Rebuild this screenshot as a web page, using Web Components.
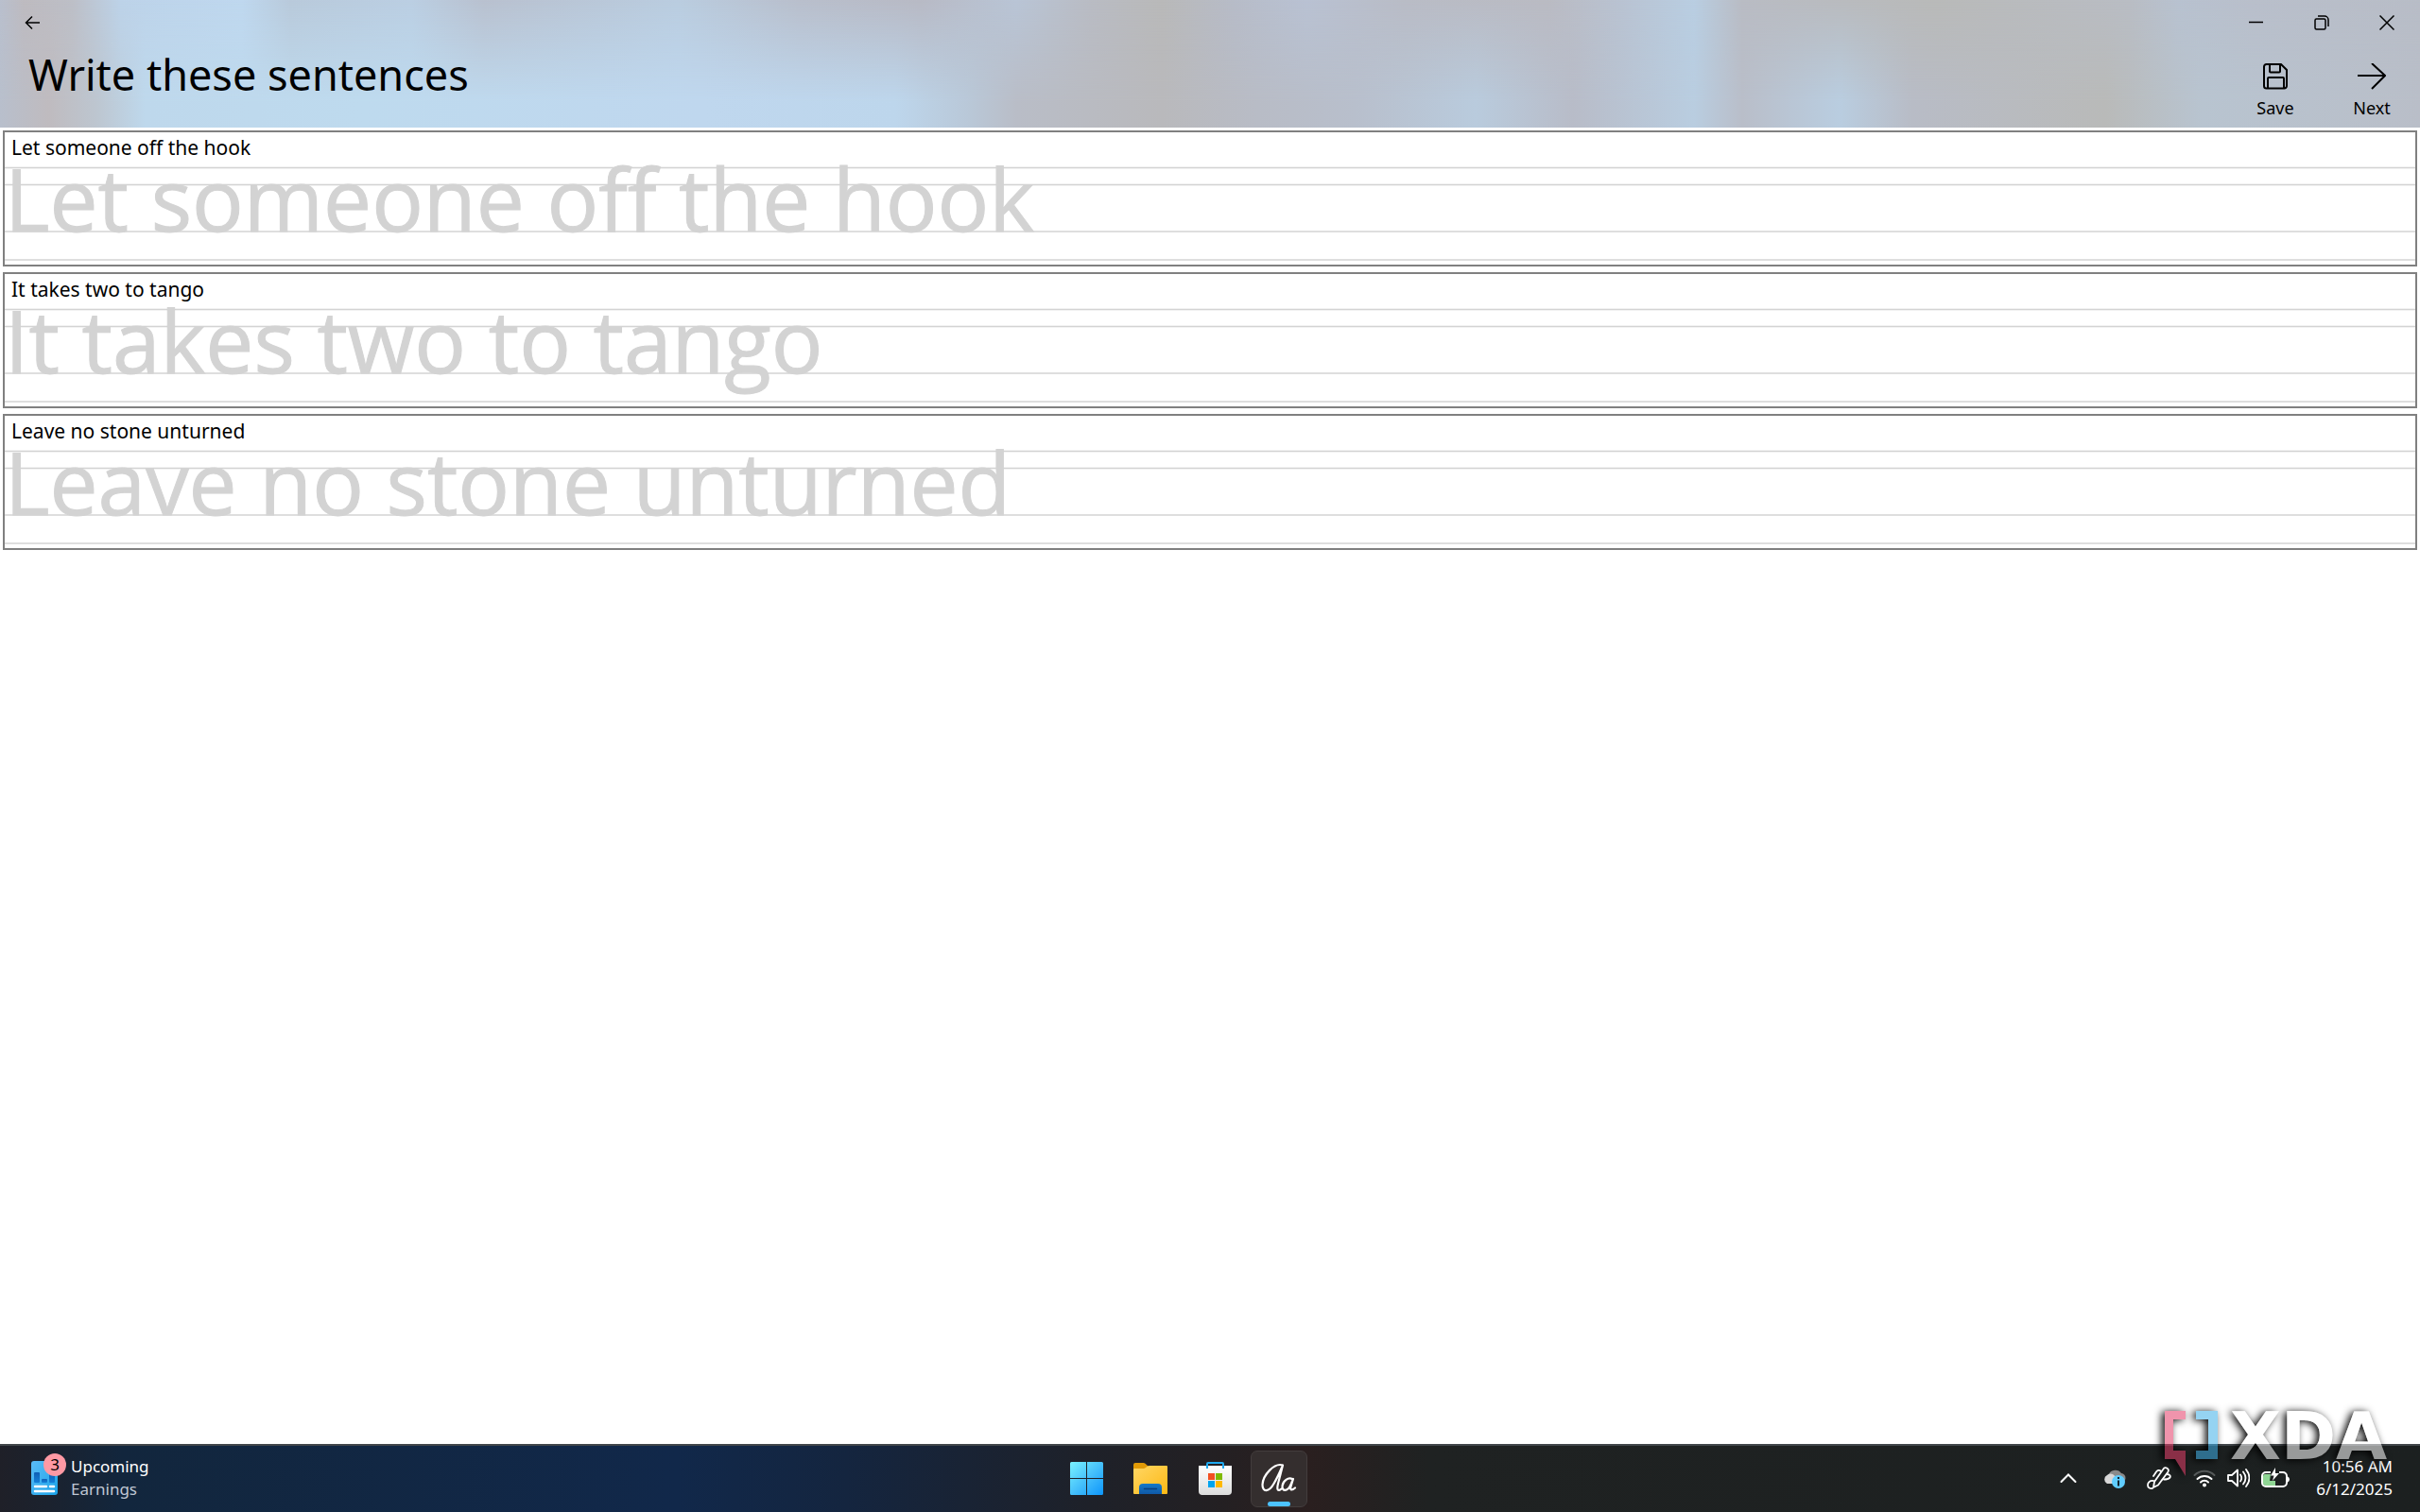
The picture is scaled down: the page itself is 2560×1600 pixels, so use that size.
<!DOCTYPE html>
<html lang="en">
<head>
<meta charset="utf-8">
<title>Write these sentences</title>
<style>
  body {
    margin: 0;
    background: #fff;
    color: #000;
    font-family: "Noto Sans", "Open Sans", sans-serif;
  }
</style>
</head>
<body>
<practice-app></practice-app>

<script>
class PracticeApp extends HTMLElement {
  constructor() {
    super();
    this.attachShadow({ mode: "open" }).innerHTML = `
      <style>
        :host { display: flex; flex-direction: column; min-height: 100vh; }
        main { flex: 1; display: flex; flex-direction: column; gap: 6px; padding: 3px; }
      </style>
      <app-header heading="Write these sentences">
        <command-button slot="commands" label="Save">
          <svg width="28" height="28" viewBox="0 0 28 28" fill="none" stroke="#000" stroke-width="2">
            <path d="M4.5 1H20l6 6v17a2.500 2.500 0 0 1-2.500 2.500h-19A2.500 2.500 0 0 1 2 24V3.500A2.500 2.500 0 0 1 4.500 1z"/>
            <path d="M8 1v7.500a1 1 0 0 0 1 1h9a1 1 0 0 0 1-1V1M6 26V16a1 1 0 0 1 1-1h15a1 1 0 0 1 1 1v10"/>
          </svg>
        </command-button>
        <command-button slot="commands" label="Next">
          <svg width="30" height="28" viewBox="0 0 30 28" fill="none" stroke="#000" stroke-width="2">
            <path d="M0 13h29M15 0l14 13-14 14"/>
          </svg>
        </command-button>
      </app-header>
      <main>
        <practice-line sentence="Let someone off the hook"></practice-line>
        <practice-line sentence="It takes two to tango"></practice-line>
        <practice-line sentence="Leave no stone unturned"></practice-line>
      </main>
      <task-bar></task-bar>
      <xda-mark></xda-mark>
    `;
  }
}

class AppHeader extends HTMLElement {
  constructor() {
    super();
    this.attachShadow({ mode: "open" });
  }

  connectedCallback() {
    this.shadowRoot.innerHTML = `
      <style>
        /* blurred wallpaper: one set of bands on top fading into another */
        :host {
          display: block;
          position: relative;
          background: linear-gradient(90deg,
            #b9c0ce 0, #bebbc0 1%, #bdbfc7 3%, #bdd3e9 5%, #bfd8ef 10%, #b9cadb 12%,
            #bbcfe3 17%, #b9c1cf 20%, #bacde0 28%, #b9bfcc 33%, #b8bac5 38%,
            #b9c5d6 42%, #b9bcc4 45%, #b9b9b9 48%, #b7bcc8 51%, #b9c2d3 54%,
            #b9bcc6 58%, #babbc3 64%, #b9c3d2 67%, #b9cee2 70%, #b9bcc4 72%,
            #b9bab9 80%, #b9bdc4 88%, #b8c2d0 90%, #b9bfcb 93%, #b8bdc7 100%);
        }
        :host::before {
          content: "";
          position: absolute;
          inset: 0;
          background: linear-gradient(90deg,
            #b8bfcc 0, #bfbbbf 2%, #bdc6d0 4%, #bed8ec 6%, #bedaee 15%, #bfd7ee 29%,
            #bdd6ec 37%, #b9c8d8 40%, #b9bdc7 42%, #b9b9bc 48%, #b8bcc6 52%, #b8bfcc 56%,
            #b9cbdd 61%, #b8bcc8 65%, #b9cde0 70%, #b9bec9 72%, #b9cde0 76%,
            #b8bcc6 79%, #b9bab9 87%, #b8c4d0 91%, #b9bec8 100%);
          -webkit-mask: linear-gradient(transparent, #000 80%);
          mask: linear-gradient(transparent, #000 80%);
        }
        .caption, .bar { position: relative; display: flex; justify-content: space-between; }
        .caption { height: 48px; }
        .caption button {
          width: 69px;
          height: 48px;
          padding: 0 2px 0 0;
          border: 0;
          background: none;
        }
        .window { display: flex; }
        svg { display: block; margin: 0 auto; }
        .bar { min-height: 87px; padding-left: 30px; }
        h1 { margin: 0; font-size: 45px; font-weight: 400; line-height: 62px; }
        .commands { display: flex; }
      </style>
      <div class="caption">
        <button aria-label="Back">
          <svg width="16" height="16" viewBox="0 0 16 16" fill="none" stroke="#000" stroke-width="1.5"><path d="M16 8H1.500M8 1.500L1.500 8 8 14.500"/></svg>
        </button>
        <div class="window">
          <button aria-label="Minimize">
            <svg width="16" height="16" viewBox="0 0 16 16" fill="none" stroke="#000" stroke-width="1.5"><path d="M0 7.500h15"/></svg>
          </button>
          <button aria-label="Restore">
            <svg width="16" height="16" viewBox="0 0 16 16" fill="none" stroke="#000" stroke-width="1.5"><rect x="1" y="4" width="11" height="11" rx="1.5"/><path d="M4 1h7a4 4 0 0 1 4 4v7"/></svg>
          </button>
          <button aria-label="Close">
            <svg width="16" height="16" viewBox="0 0 16 16" fill="none" stroke="#000" stroke-width="1.5"><path d="M.5.5l15 15M15.500.5l-15 15"/></svg>
          </button>
        </div>
      </div>
      <div class="bar">
        <h1>${this.getAttribute("heading")}</h1>
        <div class="commands"><slot name="commands"></slot></div>
      </div>
    `;
  }
}

class CommandButton extends HTMLElement {
  constructor() {
    super();
    this.attachShadow({ mode: "open" });
  }

  connectedCallback() {
    this.shadowRoot.innerHTML = `
      <style>
        :host { display: block; }
        button {
          display: flex;
          flex-direction: column;
          align-items: center;
          gap: 7px;
          width: 102px;
          padding: 19px 0 0;
          border: 0;
          background: none;
          color: inherit;
          font: 18px/24px "Noto Sans", sans-serif;
        }
      </style>
      <button><slot></slot><span>${this.getAttribute("label")}</span></button>
    `;
  }
}

class PracticeLine extends HTMLElement {
  constructor() {
    super();
    this.attachShadow({ mode: "open" });
  }

  connectedCallback() {
    const sentence = this.getAttribute("sentence");
    this.shadowRoot.innerHTML = `
      <style>
        /* four writing guides behind the text */
        :host {
          display: block;
          border: 2px solid #808080;
          padding: 2px 0 30px;
          background: linear-gradient(#fff 36px,
            #f2f2f2 36px 37px, #d3d3d3 37px 38px, #f2f2f2 38px 39px, #fff 39px 54px,
            #f2f2f2 54px 55px, #d3d3d3 55px 56px, #f2f2f2 56px 57px, #fff 57px 104px,
            #dedede 104px 106px, #fff 106px 134px,
            #dedede 134px 136px, #fff 136px);
        }
        p { margin: 0; white-space: nowrap; }
        .label { padding-left: 7px; font-size: 21px; line-height: 28px; }
        .trace {
          color: #d3d3d3;
          font-family: "Open Sans", sans-serif;
          font-size: 91px;
          line-height: 80px;
          -webkit-text-stroke: 1px #d3d3d3;
        }
      </style>
      <p class="label">${sentence}</p>
      <p class="trace">${sentence}</p>
    `;
  }
}

class TaskBar extends HTMLElement {
  constructor() {
    super();
    this.attachShadow({ mode: "open" }).innerHTML = `
      <style>
        :host {
          display: grid;
          grid-template-columns: 1fr auto 1fr;
          align-items: center;
          box-sizing: border-box;
          height: 72px;
          border-top: 2px solid #41464a;
          background: linear-gradient(90deg, #1f2028 0, #1b222e 2%, #12263d 5%, #11284a 28%,
            #14253f 35%, #1e2129 45%, #232023 50%, #2a1f1f 54%, #1f2222 59%, #1c2020 100%);
          color: #fff;
        }
        button {
          display: flex;
          align-items: center;
          justify-content: center;
          padding: 0;
          border: 0;
          background: none;
          color: inherit;
          font: 17px/24px "Noto Sans", sans-serif;
        }
        svg { display: block; }
        .widget { gap: 14px; padding: 0 0 3px 33px; text-align: left; }
        .icon { position: relative; }
        .badge {
          position: absolute;
          left: 13px;
          top: -8px;
          width: 24px;
          border-radius: 12px;
          background: #ff99a4;
          color: #000;
          text-align: center;
        }
        .line { display: block; }
        .sub { color: #c0c8d4; }
        .apps { display: flex; gap: 8px; margin-right: 58px; }
        .apps button { width: 60px; height: 60px; box-sizing: border-box; }
        .apps .active {
          position: relative;
          border: 1px solid #433d3d;
          border-radius: 7px;
          background: #342e2e;
        }
        .active::after {
          content: "";
          position: absolute;
          left: 17px;
          bottom: 0;
          width: 24px;
          height: 5px;
          border-radius: 3px;
          background: #4cc2ff;
        }
        .tray { display: flex; justify-content: flex-end; }
        .tray button { height: 60px; width: 48px; }
        .tray .status { width: auto; padding: 0 12px; gap: 12px; }
        .tray .clock {
          display: block;
          width: auto;
          padding: 0 29px 3px 16px;
          text-align: right;
        }
      </style>

      <div><button class="widget">
        <span class="icon">
          <svg width="28" height="36" viewBox="0 0 28 36">
            <defs>
              <linearGradient id="doc" x2="1" y2="1"><stop stop-color="#5bbcf7"/><stop offset="1" stop-color="#1aa3e8"/></linearGradient>
              <linearGradient id="col" x2="0" y2="1"><stop stop-color="#0f5fb5"/><stop offset="1" stop-color="#1480d8"/></linearGradient>
            </defs>
            <rect width="28" height="36" rx="3" fill="url(#doc)"/>
            <g fill="url(#col)"><rect x="3" y="12" width="6" height="11" rx="1"/><rect x="11" y="19" width="6" height="4" rx="1"/><rect x="19" y="13" width="6" height="10" rx="1"/></g>
            <path d="M4 27h12M20 27h4M4 32h20" stroke="#fff" stroke-width="2.5" stroke-linecap="round"/>
          </svg>
          <span class="badge">3</span>
        </span>
        <span><span class="line">Upcoming</span><span class="line sub">Earnings</span></span>
      </button></div>

      <div class="apps">
        <button aria-label="Start">
          <svg width="36" height="36" viewBox="0 0 36 36">
            <defs><linearGradient id="win" gradientUnits="userSpaceOnUse" x2="36" y2="36"><stop stop-color="#7af3ff"/><stop offset=".5" stop-color="#45c0fb"/><stop offset="1" stop-color="#0a93fb"/></linearGradient></defs>
            <path transform="translate(1)" fill="url(#win)" d="M1.500 0H17v17H0V1.500A1.500 1.500 0 0 1 1.500 0zM18 0h15.500A1.500 1.500 0 0 1 35 1.500V17H18zM0 18h17v17H1.500A1.500 1.500 0 0 1 0 33.500zM18 18h17v15.500a1.500 1.500 0 0 1-1.500 1.500H18z"/>
          </svg>
        </button>
        <button aria-label="File Explorer">
          <svg width="36" height="36" viewBox="0 0 36 36">
            <defs>
              <linearGradient id="fold" x2="1" y2="1"><stop stop-color="#ffd765"/><stop offset="1" stop-color="#fdb915"/></linearGradient>
              <linearGradient id="tray" x2="0" y2="1"><stop stop-color="#1579c8"/><stop offset="1" stop-color="#0f59a8"/></linearGradient>
            </defs>
            <path d="M0 3a2 2 0 0 1 2-2h8.500a3 3 0 0 1 2 .8L16 5 12 11H0z" fill="#e19a06"/>
            <path d="M0 8a1 1 0 0 1 1-1h9.500a4 4 0 0 0 2.500-1l1.500-1.200A4 4 0 0 1 17 4h18a1 1 0 0 1 1 1v28a1 1 0 0 1-1 1H1a1 1 0 0 1-1-1z" fill="url(#fold)"/>
            <path d="M6 34v-7a4 4 0 0 1 4-4h16a4 4 0 0 1 4 4v7z" fill="url(#tray)"/>
            <path d="M11.500 28.500h13" stroke="#0a3f7c" stroke-width="1.5" stroke-linecap="round"/>
          </svg>
        </button>
        <button aria-label="Microsoft Store">
          <svg width="36" height="36" viewBox="0 0 36 36">
            <defs><linearGradient id="bag" x2="0" y2="1"><stop stop-color="#fff"/><stop offset="1" stop-color="#dcdcdc"/></linearGradient></defs>
            <path d="M1 4h35v27a4 4 0 0 1-4 4H5a4 4 0 0 1-4-4z" fill="url(#bag)"/>
            <path d="M10 7V2a1 1 0 0 1 1-1h15a1 1 0 0 1 1 1v5" fill="none" stroke="#1eaaf1" stroke-width="2"/>
            <path d="M11 12h7v7h-7z" fill="#f25022"/><path d="M19 12h7v7h-7z" fill="#7fba00"/>
            <path d="M11 20h7v7h-7z" fill="#00a4ef"/><path d="M19 20h7v7h-7z" fill="#ffb900"/>
          </svg>
        </button>
        <button class="active" aria-label="Handwriting practice">
          <svg width="40" height="40" viewBox="0 0 40 40" fill="none" stroke="#fff" stroke-width="2.2" stroke-linecap="round" stroke-linejoin="round">
            <path d="M24 5.500C15 2.500 3 16 2.500 26c-.2 8.500 7 8 12-1C19 17.500 22 10 24 5.500L19 25c-1.500 6-.5 9 3.500 5.500"/>
            <path d="M34.500 20.500c-4.500-3.500-10.500 2-11 7-.4 6.500 6 5.500 9-1.500l2.500-6-2.500 8c-1 4 1 4.500 4.500 1.500"/>
          </svg>
        </button>
      </div>

      <div class="tray">
        <button aria-label="Show hidden icons">
          <svg width="18" height="12" viewBox="0 0 18 12" fill="none" stroke="#fff" stroke-width="2" stroke-linecap="round"><path d="M1.500 9L9 1.500 16.500 9"/></svg>
        </button>
        <button aria-label="OneDrive">
          <svg width="26" height="24" viewBox="0 0 26 24">
            <path d="M8 7a7 6 0 0 1 13-1 5 5 0 0 1-1 10h-9z" fill="#8a8a8a"/>
            <path d="M6 17a5 5 0 0 1 0-9 6 6 0 0 1 6-1l7 6v4z" fill="#d8d8d8"/>
            <circle cx="18" cy="15" r="7" fill="#60cdff"/>
            <path d="M18 13.500v6M18 10v2" stroke="#10242e" stroke-width="2"/>
          </svg>
        </button>
        <button aria-label="Pen">
          <svg width="26" height="26" viewBox="0 0 26 26" fill="none" stroke="#fff" stroke-width="1.8" stroke-linecap="round" stroke-linejoin="round">
            <path d="M8 16L17.500 2.500c1-1.500 2.500-1.800 4-.8s1.800 2.500.8 4L12 19.500l-5 2.500z"/>
            <path d="M15 5c-2-2-4-1-5 .5L7 10M21 8c4 0 4.500 2.500 3 4s-4 1.500-6 1.500M7 15c-4-.5-6 2-6 4.500s2 4 5 3.500"/>
          </svg>
        </button>
        <button class="status" aria-label="Network, volume, battery">
          <svg width="24" height="22" viewBox="0 0 24 22" fill="none" stroke-width="2" stroke-linecap="round">
            <path d="M1.500 7a15 15 0 0 1 21 0" stroke="#555959"/>
            <path d="M4.500 11a10.600 10.600 0 0 1 15 0M8 14.500a5.700 5.700 0 0 1 8 0" stroke="#fff"/>
            <circle cx="12" cy="17.5" r="2" fill="#fff"/>
          </svg>
          <svg width="24" height="24" viewBox="0 0 24 24" fill="none" stroke="#fff" stroke-width="1.8" stroke-linecap="round" stroke-linejoin="round">
            <path d="M1 8h4l6-5.500v17L5 14H1zM14 7.500q2.500 3.500 0 7M17 4.500q5 6.500 0 13M20 2q7 9 0 18"/>
          </svg>
          <svg width="30" height="26" viewBox="0 0 30 26">
            <path d="M4 8h6l-1 7h6v5H4.500A2.500 2.500 0 0 1 2 17.500V10a2 2 0 0 1 2-2z" fill="#8fd694"/>
            <path d="M10 6H5a4 4 0 0 0-4 4v7a4 4 0 0 0 4 4h18a4 4 0 0 0 4-4v-7a4 4 0 0 0-4-4h-4" fill="none" stroke="#fff" stroke-width="2"/>
            <path d="M28 10.500q2 1 2 3t-2 3z" fill="#fff"/>
            <path d="M15 1l-5 8.500h3.500L12 15l7-8h-4z" fill="#fff"/>
          </svg>
        </button>
        <button class="clock"><span class="line">10:56 AM</span><span class="line">6/12/2025</span></button>
      </div>
    `;
  }
}

class XdaMark extends HTMLElement {
  constructor() {
    super();
    this.attachShadow({ mode: "open" }).innerHTML = `
      <style>
        :host { position: absolute; right: 0; bottom: 0; pointer-events: none; }
        svg { display: block; }
        text { font: bold 70px "DejaVu Sans", sans-serif; }
      </style>
      <svg width="310" height="145" viewBox="0 -30 310 145">
        <defs>
          <!-- shadow only outside the shapes, so they stay see-through -->
          <filter id="drop" filterUnits="userSpaceOnUse" x="0" y="-30" width="310" height="145" color-interpolation-filters="sRGB">
            <feGaussianBlur in="SourceAlpha" stdDeviation="4"/>
            <feOffset dx="-3" dy="1"/>
            <feComposite in2="SourceAlpha" operator="out" result="shade"/>
            <feComponentTransfer in="SourceGraphic" result="face"><feFuncA type="linear" slope=".55"/></feComponentTransfer>
            <feMerge><feMergeNode in="shade"/><feMergeNode in="face"/></feMerge>
          </filter>
        </defs>
        <g filter="url(#drop)">
          <path d="M40 8h22v9H49v33h13v27L51 59H40z" fill="#e43c67"/>
          <path d="M73 8h23v51H73v-9h13V17H73z" fill="#3eafe7"/>
          <text x="109" y="59" fill="#fff">XDA</text>
        </g>
      </svg>
    `;
  }
}

customElements.define("app-header", AppHeader);
customElements.define("command-button", CommandButton);
customElements.define("practice-line", PracticeLine);
customElements.define("task-bar", TaskBar);
customElements.define("xda-mark", XdaMark);
customElements.define("practice-app", PracticeApp);
</script>
</body>
</html>
